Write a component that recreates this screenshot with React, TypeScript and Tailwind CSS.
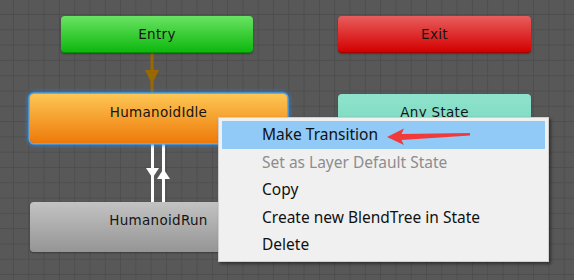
import React from "react";

const nodeText = "font-['DejaVu_Sans',sans-serif] text-[13.5px] tracking-[0.3px] text-[#151515]";

function Node({
  className,
  label,
}: {
  className: string;
  label: string;
}) {
  return (
    <div className={`absolute rounded-[4px] ${className}`}>
      <div className={`h-9 flex items-center justify-center ${nodeText}`}>{label}</div>
    </div>
  );
}

const ITEMS = [
  { label: "Make Transition", active: true },
  { label: "Set as Layer Default State", disabled: true },
  { label: "Copy" },
  { label: "Create new BlendTree in State" },
  { label: "Delete" },
];

export default function App() {
  return (
    <div className="relative w-[574px] h-[280px] overflow-hidden bg-[#585858] bg-[linear-gradient(to_right,#4e4e4e_1px,transparent_1px),linear-gradient(to_bottom,#4e4e4e_1px,transparent_1px)] bg-[size:15.3px_15.3px] bg-[position:13px_14px]">
      {/* transitions */}
      <svg className="absolute inset-0" width="574" height="280">
        <line x1="152" y1="53" x2="152" y2="94" stroke="#9a6800" strokeWidth="3" />
        <polygon points="145,70 159,70 152,84" fill="#9a6800" />
        <line x1="152.5" y1="143" x2="152.5" y2="202" stroke="#fff" strokeWidth="3" />
        <line x1="163.5" y1="143" x2="163.5" y2="202" stroke="#fff" strokeWidth="3" />
        <polygon points="146,168 159,168 152.5,178" fill="#fff" />
        <polygon points="157,179 170,179 163.5,169" fill="#fff" />
      </svg>

      <Node
        label="Entry"
        className="left-[61px] top-[16px] w-[192px] h-[37px] bg-[linear-gradient(to_bottom,#6ae363,#0db80d)] border-b border-[#0a8f0a] shadow-[0_1px_2px_rgba(0,0,0,0.35)]"
      />
      <Node
        label="Exit"
        className="left-[338px] top-[16px] w-[193px] h-[37px] bg-[linear-gradient(to_bottom,#e85d5d,#d40000)] border-b border-[#a00000] shadow-[0_1px_2px_rgba(0,0,0,0.35)]"
      />
      <Node
        label="HumanoidIdle"
        className="left-[30px] top-[94px] w-[257px] h-[49px] bg-[linear-gradient(to_bottom,#fdc653,#ee7a0a)] shadow-[0_0_0_1.5px_#5aaef5,0_0_4px_2px_#2f86dc]"
      />
      <Node
        label="Any State"
        className="left-[338px] top-[94px] w-[193px] h-[40px] bg-[linear-gradient(to_bottom,#8fe3cd,#7ad8bd)] shadow-[0_1px_2px_rgba(0,0,0,0.35)]"
      />
      <Node
        label="HumanoidRun"
        className="left-[30px] top-[202px] w-[257px] h-[50px] bg-[linear-gradient(to_bottom,#c3c3c3,#959595)] shadow-[0_1px_2px_rgba(0,0,0,0.35)]"
      />

      {/* context menu */}
      <div className="absolute left-[218px] top-[117px] w-[331px] h-[145px] bg-[#f0f0f0] border border-[#cfcfcf] shadow-[2px_2px_3px_rgba(0,0,0,0.45)] pt-[3px] px-[3px] font-['Noto_Sans','Liberation_Sans',sans-serif] text-[15.5px]">
        {ITEMS.map((it) => (
          <div
            key={it.label}
            className={`h-[27.5px] flex items-center pl-[40px] ${
              it.active ? "bg-[#91c9f7] text-[#111]" : it.disabled ? "text-[#8d8d8d]" : "text-[#111]"
            }`}
          >
            {it.label}
          </div>
        ))}
      </div>

      {/* red annotation arrow */}
      <svg className="absolute inset-0 pointer-events-none" width="574" height="280">
        <polygon
          points="387,137 404,128.5 401.5,134 470,133 470,135.5 401.5,140 404,145"
          fill="#f23a3a"
        />
      </svg>
    </div>
  );
}
